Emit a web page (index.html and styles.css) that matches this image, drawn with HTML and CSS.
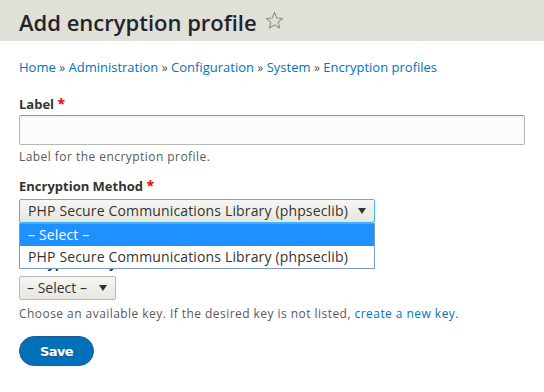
FILE: index.html
```html
<!DOCTYPE html>
<html>
<head>
<meta charset="utf-8">
<link rel="stylesheet" href="styles.css">
</head>
<body>
<header class="page-header">
  <h1 class="page-title">Add encryption profile</h1>
  <svg class="star" width="19" height="19" viewBox="0 0 20 20"><path d="M10 1.6 L12.4 7.4 L18.6 7.8 L13.8 11.8 L15.4 17.9 L10 14.6 L4.6 17.9 L6.2 11.8 L1.4 7.8 L7.6 7.4 Z" fill="none" stroke="#8e8e84" stroke-width="1.1" stroke-linejoin="round"/></svg>
</header>
<main class="content">
  <nav class="breadcrumb">
    <a href="#">Home</a> <span class="sep">»</span> <a href="#">Administration</a> <span class="sep">»</span> <a href="#">Configuration</a> <span class="sep">»</span> <a href="#">System</a> <span class="sep">»</span> <a href="#">Encryption profiles</a>
  </nav>
  <div class="form-item">
    <label class="label">Label <span class="req">*</span></label>
    <div class="text-input"></div>
    <div class="desc">Label for the encryption profile.</div>
  </div>
  <div class="form-item method">
    <label class="label">Encryption Method <span class="req">*</span></label>
    <div class="select-wrap">
      <div class="select focused"><span class="value">PHP Secure Communications Library (phpseclib)</span><span class="arrow"></span></div>
      <div class="dropdown">
        <div class="option selected">– Select –</div>
        <div class="option">PHP Secure Communications Library (phpseclib)</div>
      </div>
    </div>
  </div>
  <div class="form-item key">
    <label class="label">Encryption Key</label>
    <div class="select small"><span class="value">– Select –</span><span class="arrow"></span></div>
    <div class="desc">Choose an available key. If the desired key is not listed, <a href="#">create a new key</a>.</div>
  </div>
  <button class="save">Save</button>
</main>
</body>
</html>
```
FILE: styles.css
```css
body {
  margin: 0;
  font-family: "Open Sans", "DejaVu Sans", sans-serif;
  font-size: 13px;
  color: #333;
  background: #fff;
}
a { color: #0074bd; text-decoration: none; }
.page-header {
  background: #e0e0d8;
  height: 41px;
  display: flex;
  align-items: center;
  padding: 0 19px;
  gap: 8px;
}
.page-title {
  margin: 0;
  font-size: 22px;
  font-weight: 600;
  color: #232429;
  line-height: 1;
  position: relative;
  top: 1px;
}
.star { display: block; }
.content { padding: 0 19px; }
.breadcrumb {
  margin-top: 17px;
  line-height: 18px;
  color: #0074bd;
}
.breadcrumb .sep { font-size: 12px; color: #555; }
.form-item { margin-top: 18px; }
.label {
  display: block;
  font-weight: 700;
  line-height: 18px;
  color: #333;
}
.req { color: #e00; font-size: 14px; }
.text-input {
  margin-top: 2px;
  height: 28px;
  border: 1px solid #b8b8b8;
  border-top-color: #999;
  border-radius: 2px;
  background: #fcfcfa;
  box-shadow: inset 0 1px 2px rgba(0,0,0,0.08);
}
.desc {
  margin-top: 4px;
  font-size: 12px;
  color: #595959;
  line-height: 16px;
  letter-spacing: 0.45px;
}
.select-wrap { position: relative; margin-top: 4px; width: 356px; }
.select {
  box-sizing: border-box;
  height: 24px;
  border: 1px solid #b8b8b8;
  border-radius: 2px;
  background: linear-gradient(#f6f6f3, #e7e7df);
  font-size: 14px;
  line-height: 22px;
  padding: 0 8px;
  color: #333;
  display: flex;
  align-items: center;
  width: fit-content;
  white-space: nowrap;
}
.select .value { letter-spacing: 0.15px; }
.select.small { padding: 0 8px 0 7px; }
.select.small .value { letter-spacing: 0; }
.select.small .arrow { margin-left: 12px; }
.select.focused { border-color: #40b6ff; width: 356px; justify-content: space-between; }
.arrow {
  flex: none;
  width: 0; height: 0;
  border-left: 4px solid transparent;
  border-right: 4px solid transparent;
  border-top: 6px solid #333;
  margin-left: 8px;
}
.dropdown {
  position: absolute;
  left: 0; top: 24px;
  width: 356px;
  box-sizing: border-box;
  border: 1px solid #7a9cc6;
  background: #fff;
  z-index: 2;
  font-size: 14px;
  letter-spacing: 0.15px;
  white-space: nowrap;
}
.option { height: 22px; line-height: 22px; padding: 0 8px; color: #333; }
.option.selected { background: #1e90ff; color: #fff; }
.method { margin-top: 12px; }
.key { margin-top: 31px; }
.key .select { margin-top: 4px; }
.key .desc { margin-top: 6px; }
.save {
  margin-top: 14px;
  width: 75px;
  height: 30px;
  border: 1px solid #1e5c90;
  border-radius: 15px;
  background: #0071b8;
  color: #fff;
  font-family: "DejaVu Sans", sans-serif;
  font-weight: 700;
  font-size: 13px;
  letter-spacing: -0.6px;
  text-shadow: 0 1px #135a8a;
}
```
